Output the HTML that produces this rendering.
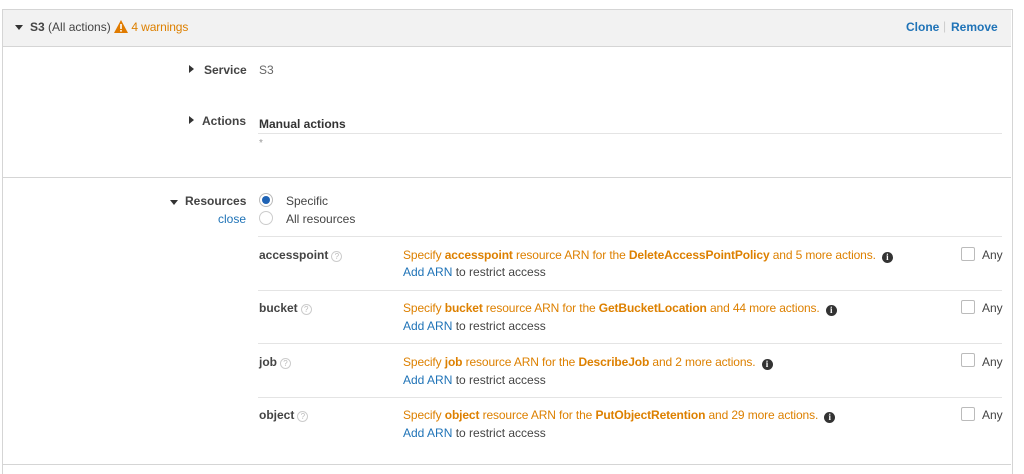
<!DOCTYPE html>
<html><head><style>
html,body{margin:0;width:1024px;height:474px;overflow:hidden}
body{background:#fff;font-family:"Liberation Sans",Arial,sans-serif;font-size:12px;color:#444;position:relative}
.a{position:absolute;white-space:nowrap}
.b{font-weight:bold}
.o{color:#dd8000;letter-spacing:-0.12px}
.l{color:#1f73b7}
.hl{position:absolute;height:1px;background:#e4e4e4}
.tri{display:inline-block;width:0;height:0}
.dn{border-left:4px solid transparent;border-right:4px solid transparent;border-top:5px solid #333}
.rt{border-top:4px solid transparent;border-bottom:4px solid transparent;border-left:5px solid #333}
.info{display:inline-block;width:11px;height:11px;border-radius:50%;background:#333;color:#fff;font-size:9px;font-weight:bold;text-align:center;line-height:11px;font-family:"Liberation Serif",serif;vertical-align:-1px;margin-left:6px}
.q{display:inline-block;width:9px;height:9px;border:1px solid #ccc;border-radius:50%;color:#bbb;font-size:8px;text-align:center;line-height:9px;vertical-align:0;margin-left:3px;font-weight:normal}
.cb{position:absolute;width:12px;height:12px;border:1px solid #bbb;border-radius:2px;background:#fff}
</style></head><body>
<div style="position:absolute;left:2px;top:9px;width:1009px;height:480px;border:1px solid #d5d5d5"></div>
<div style="position:absolute;left:3px;top:10px;width:1008px;height:36px;background:#f2f2f2;border-bottom:1px solid #d5d5d5"></div>
<div class="a" style="left:15px;top:21px"><span class="tri dn" style="vertical-align:2px"></span></div>
<div class="a" style="left:30px;top:20px;color:#444"><span class="b">S3</span> (All actions) <svg width="14" height="13" viewBox="0 0 14 13" style="vertical-align:-2px"><path d="M7 0L14 13H0Z" fill="#e07b00"/><rect x="6.2" y="4" width="1.6" height="5" fill="#fff"/><rect x="6.2" y="10" width="1.6" height="1.6" fill="#fff"/></svg> <span class="o">4 warnings</span></div>
<div class="a b l" style="left:906px;top:20px">Clone</div>
<div class="a" style="left:943px;top:19px;color:#ccc">|</div>
<div class="a b l" style="left:951px;top:20px">Remove</div>

<div class="a" style="left:189px;top:62px"><span class="tri rt"></span></div>
<div class="a b" style="left:204px;top:63px">Service</div>
<div class="a" style="left:259px;top:63px;color:#666">S3</div>
<div class="a" style="left:189px;top:113px"><span class="tri rt"></span></div>
<div class="a b" style="left:202px;top:114px">Actions</div>
<div class="a b" style="left:259px;top:117px;color:#333">Manual actions</div>
<div class="hl" style="left:258px;top:133px;width:744px"></div>
<div class="a" style="left:259px;top:138px;color:#999;font-size:10px">*</div>
<div class="hl" style="left:3px;top:177px;width:1008px;background:#d5d5d5"></div>

<div class="a" style="left:170px;top:194px"><span class="tri dn"></span></div>
<div class="a b" style="left:185px;top:194px">Resources</div>
<div class="a l" style="left:218px;top:212px">close</div>
<div style="position:absolute;left:259px;top:193px;width:12px;height:12px;border:1px solid #bbb;border-radius:50%"></div>
<div style="position:absolute;left:262px;top:196px;width:8px;height:8px;background:#1f63b5;border-radius:50%"></div>
<div style="position:absolute;left:259px;top:211px;width:12px;height:12px;border:1px solid #ccc;border-radius:50%"></div>
<div class="a" style="left:286px;top:194px">Specific</div>
<div class="a" style="left:286px;top:212px">All resources</div>

<div class="hl" style="left:258px;top:236px;width:744px"></div>
<div class="a b" style="left:259px;top:248px">accesspoint<span class="q">?</span></div>
<div class="a o" style="left:403px;top:248px">Specify <b>accesspoint</b> resource ARN for the <b>DeleteAccessPointPolicy</b> and 5 more actions.<span class="info">i</span></div>
<div class="a" style="left:403px;top:265px"><span class="l">Add ARN</span> to restrict access</div>
<div class="cb" style="left:961px;top:247px"></div><div class="a" style="left:982px;top:248px">Any</div>

<div class="hl" style="left:258px;top:290px;width:744px"></div>
<div class="a b" style="left:259px;top:301px">bucket<span class="q">?</span></div>
<div class="a o" style="left:403px;top:301px">Specify <b>bucket</b> resource ARN for the <b>GetBucketLocation</b> and 44 more actions.<span class="info">i</span></div>
<div class="a" style="left:403px;top:319px"><span class="l">Add ARN</span> to restrict access</div>
<div class="cb" style="left:961px;top:300px"></div><div class="a" style="left:982px;top:301px">Any</div>

<div class="hl" style="left:258px;top:343px;width:744px"></div>
<div class="a b" style="left:259px;top:355px">job<span class="q">?</span></div>
<div class="a o" style="left:403px;top:355px">Specify <b>job</b> resource ARN for the <b>DescribeJob</b> and 2 more actions.<span class="info">i</span></div>
<div class="a" style="left:403px;top:373px"><span class="l">Add ARN</span> to restrict access</div>
<div class="cb" style="left:961px;top:353px"></div><div class="a" style="left:982px;top:355px">Any</div>

<div class="hl" style="left:258px;top:397px;width:744px"></div>
<div class="a b" style="left:259px;top:408px">object<span class="q">?</span></div>
<div class="a o" style="left:403px;top:408px">Specify <b>object</b> resource ARN for the <b>PutObjectRetention</b> and 29 more actions.<span class="info">i</span></div>
<div class="a" style="left:403px;top:426px"><span class="l">Add ARN</span> to restrict access</div>
<div class="cb" style="left:961px;top:407px"></div><div class="a" style="left:982px;top:408px">Any</div>

<div class="hl" style="left:3px;top:464px;width:1008px;background:#d5d5d5"></div>
</body></html>
